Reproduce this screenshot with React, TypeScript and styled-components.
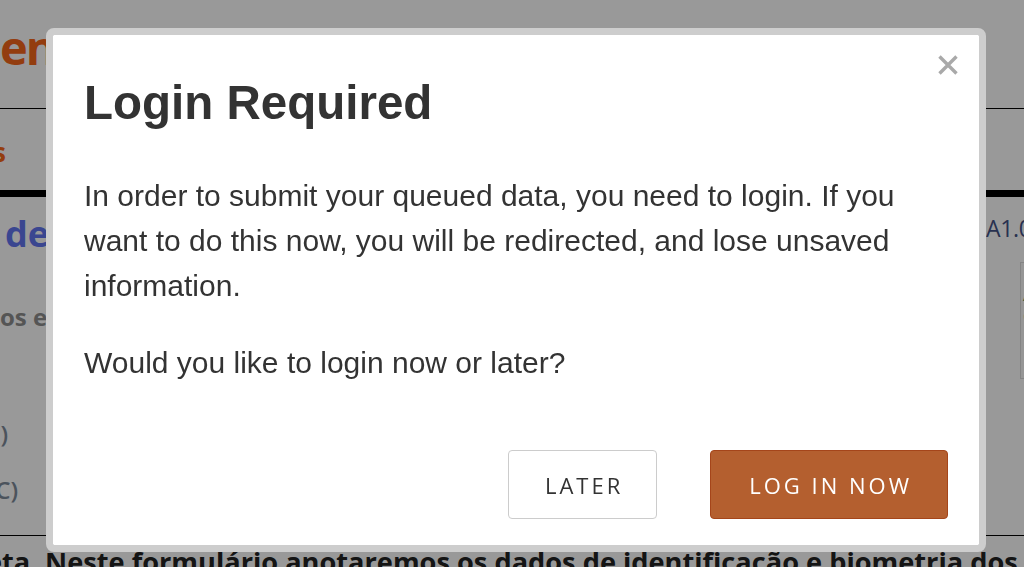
import React from "react";
import styled, { createGlobalStyle } from "styled-components";

const GlobalStyle = createGlobalStyle`
  html, body {
    margin: 0;
    padding: 0;
    overflow: hidden;
    background: #fff;
  }
  * {
    box-sizing: border-box;
  }
`;

export default function App() {
  return (
    <>
      <GlobalStyle />
      <Page>
        <Header>
          <SiteTitle>
            <Tail $w={0}>Id</Tail>entificação Florestal de Parcelas
          </SiteTitle>
        </Header>
        <Nav>
          <NavItem>
            <Tail $w={6}>Parcelas</Tail>
          </NavItem>
        </Nav>
        <Content>
          <LeftCol>
            <FormTitle>
              <Tail $w={5}>Ficha&nbsp;</Tail>de Campo
            </FormTitle>
            <Subtitle>
              <Tail $w={0}>Dad</Tail>os e informações gerais
            </Subtitle>
            <FieldLabel $top={90}>
              <Tail $w={8}>Altitude (m)</Tail>
            </FieldLabel>
            <FieldLabel $top={32}>
              <Tail $w={18}>Temperatura (°C)</Tail>
            </FieldLabel>
          </LeftCol>
          <RightCol>
            <Version>A1.0.2</Version>
            <SideBox>
              <SideText>A</SideText>
              <SideText>C</SideText>
            </SideBox>
          </RightCol>
        </Content>
        <Intro>
          <Tail $w={2}>cole</Tail>ta. Neste formulário anotaremos os dados de
          identificação e biometria dos indivíduos
        </Intro>
      </Page>

      <Backdrop />
      <Dialog role="dialog" aria-modal="true">
        <CloseButton aria-label="Close">
          <svg width="20" height="20" viewBox="0 0 20 20">
            <path
              d="M1.5 1.5 L18.5 18.5 M18.5 1.5 L1.5 18.5"
              stroke="currentColor"
              strokeWidth="3.4"
              fill="none"
            />
          </svg>
        </CloseButton>
        <DialogTitle>Login Required</DialogTitle>
        <DialogBody>
          <Para>
            In order to submit your queued data, you need to login. If you want
            to do this now, you will be redirected, and lose unsaved
            information.
          </Para>
          <Para $spaced>Would you like to login now or later?</Para>
        </DialogBody>
        <DialogFooter>
          <ActionButton>LATER</ActionButton>
          <ActionButton $primary>LOG IN NOW</ActionButton>
        </DialogFooter>
      </Dialog>
    </>
  );
}

/* page behind the dialog */

const Page = styled.div`
  width: 1024px;
  height: 567px;
  overflow: hidden;
  background: #fff;
  font-family: "Open Sans", sans-serif;
`;

// shows only the end of a word, which runs off to the left of the page
const Tail = styled.span<{ $w: number }>`
  display: inline-flex;
  justify-content: flex-end;
  width: ${(p) => p.$w}px;
  white-space: nowrap;
`;

const Header = styled.header`
  height: 109px;
  padding-top: 21px;
  border-bottom: 1px solid #000;
`;

const SiteTitle = styled.h1`
  margin: 0;
  font-size: 47px;
  line-height: 52px;
  font-weight: 700;
  letter-spacing: -2px;
  color: #f5661a;
  white-space: nowrap;
`;

const Nav = styled.nav`
  height: 88px;
  padding-top: 30px;
  border-bottom: 7px solid #000;
`;

const NavItem = styled.div`
  font-size: 26px;
  line-height: 26px;
  font-weight: 700;
  color: #f5661a;
  white-space: nowrap;
`;

const Content = styled.section`
  display: grid;
  grid-template-columns: 1fr 38px;
  height: 339px;
  border-bottom: 1px solid #000;
`;

const LeftCol = styled.div`
  display: flex;
  flex-direction: column;
  padding-top: 15px;
  white-space: nowrap;
  overflow: hidden;
`;

const FormTitle = styled.h2`
  margin: 0;
  font-size: 36px;
  line-height: 44px;
  font-weight: 700;
  color: #6276f0;
`;

const Subtitle = styled.div`
  margin-top: 46px;
  font-size: 24px;
  line-height: 30px;
  font-weight: 700;
  color: #8e8e8e;
`;

const FieldLabel = styled.div<{ $top: number }>`
  margin-top: ${(p) => p.$top}px;
  font-size: 24px;
  line-height: 24px;
  font-weight: 600;
  color: #7d8a99;
`;

const RightCol = styled.div`
  display: flex;
  flex-direction: column;
  padding-top: 17px;
  white-space: nowrap;
`;

const Version = styled.div`
  font-size: 23px;
  line-height: 28px;
  letter-spacing: -0.3px;
  color: #435385;
`;

const SideBox = styled.div`
  margin: 20px 0 0 34px;
  width: 200px;
  height: 117px;
  padding: 20px 0 0 2px;
  background: #fafafa;
  border: 1px solid #ddd;
`;

const SideText = styled.div`
  font-size: 18px;
  line-height: 22px;
  color: #3c8a5a;
`;

const Intro = styled.p`
  margin: 12px 0 0;
  font-size: 27.2px;
  line-height: 27.5px;
  font-weight: 700;
  color: #222;
  white-space: nowrap;
`;

/* dialog */

const Backdrop = styled.div`
  position: fixed;
  inset: 0;
  background: rgba(0, 0, 0, 0.4);
`;

const Dialog = styled.div`
  position: fixed;
  top: 28px;
  left: 46px;
  width: 940px;
  height: 524px;
  display: flex;
  flex-direction: column;
  padding: 41px 31px 26px;
  background: #fff;
  background-clip: padding-box;
  border: 7px solid #cdcdcd;
  border-radius: 8px;
  font-family: "Liberation Sans", Arial, sans-serif;
  color: #333;
`;

const CloseButton = styled.button`
  position: absolute;
  top: 20px;
  right: 21px;
  width: 20px;
  height: 20px;
  padding: 0;
  border: 0;
  background: none;
  color: #a9a9a9;
  cursor: pointer;
  display: flex;
`;

const DialogTitle = styled.h3`
  margin: 0;
  font-size: 47.5px;
  line-height: 54px;
  font-weight: 700;
  color: #333;
`;

const DialogBody = styled.div`
  margin-top: 43px;
`;

const Para = styled.p<{ $spaced?: boolean }>`
  margin: ${(p) => (p.$spaced ? "32px" : "0")} 0 0;
  font-size: 30px;
  line-height: 45px;
`;

const DialogFooter = styled.div`
  margin-top: auto;
  display: flex;
  justify-content: flex-end;
  gap: 53px;
`;

const ActionButton = styled.button<{ $primary?: boolean }>`
  height: 69px;
  padding: ${(p) => (p.$primary ? "0 35px 0 38px" : "0 33px 0 36px")};
  border-radius: 4px;
  border: 1px solid ${(p) => (p.$primary ? "#a5451a" : "#cccccc")};
  background: ${(p) => (p.$primary ? "#b45f2f" : "#fff")};
  color: ${(p) => (p.$primary ? "#fff" : "#333")};
  font-family: "Open Sans", sans-serif;
  font-size: 22px;
  letter-spacing: 3px;
  cursor: pointer;
`;
